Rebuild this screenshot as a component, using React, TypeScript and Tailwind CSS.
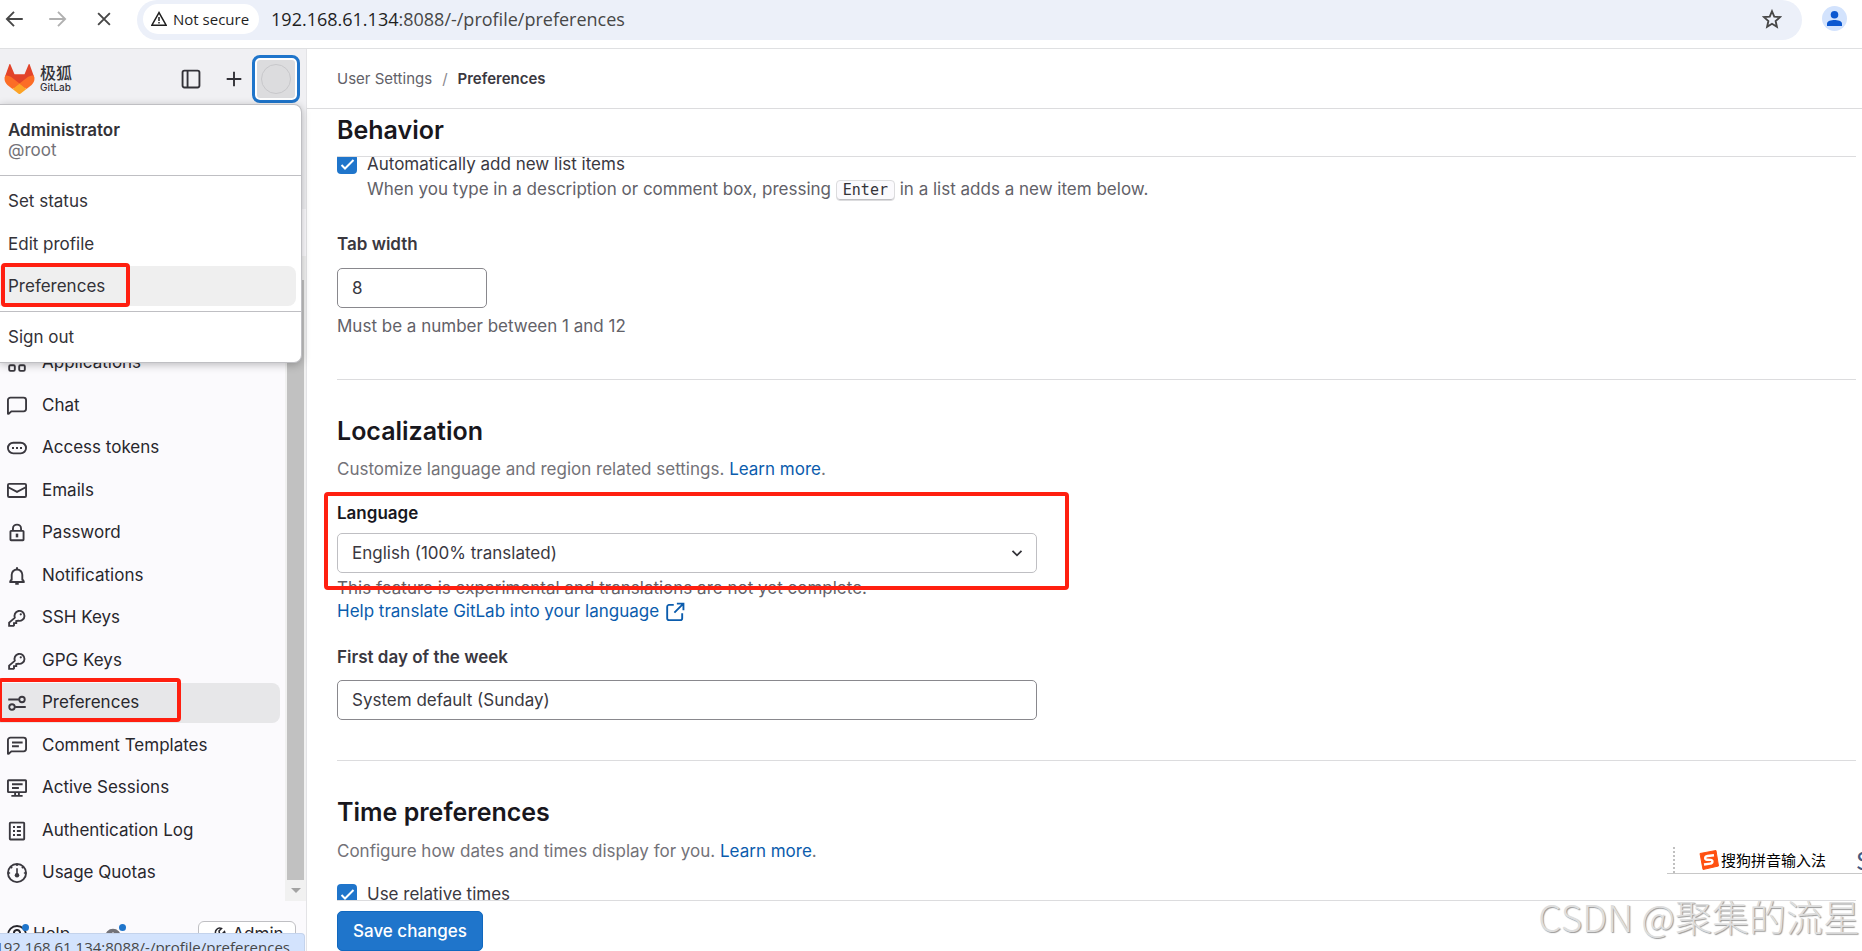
import React, { useState } from "react";

type IconProps = { className?: string };

const Svg = ({ className = "w-5 h-5", children }: IconProps & { children: React.ReactNode }) => (
  <svg
    viewBox="0 0 16 16"
    className={className}
    fill="none"
    stroke="currentColor"
    strokeWidth="1.5"
    aria-hidden="true"
  >
    {children}
  </svg>
);

const icons: Record<string, React.ReactNode> = {
  applications: (
    <>
      <rect x="1.75" y="1.75" width="4.5" height="4.5" rx="1" />
      <rect x="9.75" y="1.75" width="4.5" height="4.5" rx="1" />
      <rect x="1.75" y="9.75" width="4.5" height="4.5" rx="1" />
      <rect x="9.75" y="9.75" width="4.5" height="4.5" rx="1" />
    </>
  ),
  chat: <path d="M.75 14.8V3.25a2 2 0 0 1 2-2h10.5a2 2 0 0 1 2 2v7a2 2 0 0 1-2 2H3.5L.9 14.6" />,
  token: (
    <>
      <rect x=".75" y="3.75" width="14.5" height="8.5" rx="4.25" />
      <path d="M4 8h1.6M7.2 8h1.6M10.4 8H12" strokeWidth="1.6" />
    </>
  ),
  mail: (
    <>
      <rect x=".75" y="2.25" width="14.5" height="10.5" rx="1" />
      <path d="m1 5 7 3.7L15 5" />
    </>
  ),
  lock: (
    <>
      <rect x="2.75" y="6.25" width="10.5" height="7.5" rx=".5" />
      <path d="M4.75 6V4.5a3.25 3.25 0 0 1 6.5 0V6" />
      <path d="M8 8.5v3" strokeWidth="2" />
    </>
  ),
  bell: (
    <>
      <path d="M3.75 11.5V7a4.25 4.25 0 0 1 8.5 0v4.500M1.9 12.75h12.2M3.6 10.8l-1.300 1.900M12.4 10.800l1.300 1.900" />
      <path d="M8 .9v2M6.600 14.200h2.800" strokeWidth="1.6" />
    </>
  ),
  key: (
    <>
      <path d="M6.4 8.1A4 4 0 1 1 9 10.2l-1.6.3v1.6H5.6v1.8l-.4.4H1.7v-2.6l4.7-4" />
      <circle cx="11" cy="5" r=".9" fill="currentColor" stroke="none" />
    </>
  ),
  preferences: (
    <>
      <path d="M1 5.2h8.5M6.5 11.2H15" />
      <circle cx="12" cy="5.2" r="2.2" />
      <circle cx="4" cy="11.2" r="2.2" />
    </>
  ),
  comment: (
    <>
      <path d="M.75 14.8V3.25a2 2 0 0 1 2-2h10.5a2 2 0 0 1 2 2v7a2 2 0 0 1-2 2H3.5L.9 14.6" />
      <path d="M4 5.2h8.5M4 8.2h5.5" />
    </>
  ),
  monitor: (
    <>
      <rect x=".75" y="1.75" width="14.5" height="9.5" rx=".5" />
      <path d="M4 5h8.5M4 8h5.5M6.5 11.5v3M9.5 11.5v3M3.5 14.3h9" />
    </>
  ),
  log: (
    <>
      <rect x="2.25" y="1.25" width="11.5" height="13.5" rx=".5" />
      <path d="M4.8 4.8h1.6M4.8 8h1.6M4.8 11.2h1.6M7.9 4.8h3.2M7.9 8h3.2M7.9 11.2h3.2" />
    </>
  ),
  quota: (
    <>
      <circle cx="8" cy="8" r="7.25" />
      <path d="M8 4.2v5M8 1v1.3M1 8h1.5M13.5 8H15M3.2 3.2l.9.9M12.8 3.2l-.9.9" strokeWidth="1.3" />
      <circle cx="8" cy="9.8" r="1.8" fill="currentColor" stroke="none" />
    </>
  ),
};

const navItems = [
  { label: "Applications", icon: "applications" },
  { label: "Chat", icon: "chat" },
  { label: "Access tokens", icon: "token" },
  { label: "Emails", icon: "mail" },
  { label: "Password", icon: "lock" },
  { label: "Notifications", icon: "bell" },
  { label: "SSH Keys", icon: "key" },
  { label: "GPG Keys", icon: "key" },
  { label: "Preferences", icon: "preferences", active: true },
  { label: "Comment Templates", icon: "comment" },
  { label: "Active Sessions", icon: "monitor" },
  { label: "Authentication Log", icon: "log" },
  { label: "Usage Quotas", icon: "quota" },
];

function BrowserBar() {
  return (
    <div className="h-[49px] shrink-0 border-b border-[#dfe0e2] bg-white flex items-start text-[#474747]">
      <div className="h-[38px] w-[137px] shrink-0 flex items-center gap-6 pl-1">
        <button type="button" aria-label="Back">
          <Svg>
            <path d="M15 8H2.5M8 2.3 2.3 8 8 13.7" />
          </Svg>
        </button>
        <button type="button" aria-label="Forward" className="text-[#b0b0b0]">
          <Svg>
            <path d="M1 8h12.5M8 2.3 13.7 8 8 13.7" />
          </Svg>
        </button>
        <button type="button" aria-label="Stop" className="ml-0.5">
          <Svg>
            <path d="m3.3 3.3 9.4 9.4M12.7 3.3l-9.4 9.4" />
          </Svg>
        </button>
      </div>
      <div className="h-10 flex-1 rounded-[20px] bg-[#ecf0f9] flex items-center pb-0.5 pl-1.5 pr-5">
        <div className="h-[30px] rounded-full bg-white flex items-center gap-1.5 px-2 text-[#1f1f1f]">
          <Svg className="w-4 h-4">
            <path d="M8 1.6.9 14.2h14.2z" />
            <path d="M8 6v4M8 11v1.6" />
          </Svg>
          <span className="font-['Open_Sans',sans-serif] text-[15px] leading-5 pr-0.5">Not secure</span>
        </div>
        <div className="ml-3 font-['Open_Sans',sans-serif] text-[18px] leading-6">
          <span className="text-[#1f1f1f]">192.168.61.134</span>:8088/-/profile/preferences
        </div>
        <button type="button" aria-label="Bookmark" className="ml-auto">
          <Svg>
            <path d="m8 1.8 1.8 4.3 4.6.4-3.5 3.1 1 4.6L8 11.8l-3.9 2.4 1-4.6-3.5-3.1 4.6-.4z" />
          </Svg>
        </button>
      </div>
      <div className="w-[60px] h-[37px] shrink-0 flex items-center pl-5">
        <button type="button" aria-label="Profile" className="w-[25px] h-[25px] rounded-full bg-[#d3e3fd]">
          <svg viewBox="0 0 25 25" fill="#0b57d0" aria-hidden="true">
            <circle cx="12.5" cy="8.8" r="3.8" />
            <path d="M5 20v-2.2c0-3 4.5-3.8 7.5-3.8s7.5.8 7.5 3.8V20z" />
          </svg>
        </button>
      </div>
    </div>
  );
}

function TanukiLogo() {
  return (
    <svg viewBox="0 0 31 30" className="w-[31px] h-[30px]" aria-hidden="true">
      <path fill="#e24329" d="M5.4.3 1.200 12 .8 14l14.7 15.5L30.200 14l-.4-2L25.600.3c-.2-.4-.7-.4-.9 0L20.500 10.200h-10L6.300.3c-.2-.4-.7-.4-.9 0z" />
      <path fill="#fc6d26" d="M1.2 11.5C-.2 15 .7 18.600 3.400 21l5.100 4 7-5.600-8-6.200c-1.700-1.200-3.800-1.700-6.300-1.700zM29.800 11.500c1.400 3.500.5 7.100-2.200 9.500l-5.100 4-7-5.600 8-6.200c1.700-1.200 3.800-1.700 6.300-1.700z" />
      <path fill="#fca326" d="m8.500 25 6.100 4.700c.6.400 1.200.4 1.800 0l6.100-4.700-7-5.600z" />
    </svg>
  );
}

function UserMenu() {
  const item = "flex items-center h-10 mr-[5px] pt-0.5 pl-2 rounded-r-lg text-[#333238]";
  return (
    <div className="absolute left-0 top-[55px] z-20 w-[302px] rounded-r-lg border border-l-0 border-[#bfbfc3] bg-white shadow-[0_2px_8px_rgba(0,0,0,0.25)]">
      <div className="h-[71px] pl-2 pt-[15px] border-b border-[#bfbfc3]">
        <div className="font-semibold leading-5 text-[#333238]">Administrator</div>
        <div className="leading-5 text-[#737278]">@root</div>
      </div>
      <div className="py-[5px] h-[136px] flex flex-col justify-between border-b border-[#bfbfc3]">
        <a href="#status" className={item}>Set status</a>
        <a href="#profile" className={item}>Edit profile</a>
        <div className="relative">
          <a href="#preferences" className={`${item} bg-[#efefef]`}>Preferences</a>
          <div className="absolute left-px -top-[3px] w-[129px] h-11 rounded-[4px] border-4 border-[#ff1f10]" />
        </div>
      </div>
      <div className="py-[5px]">
        <a href="#signout" className={item}>Sign out</a>
      </div>
    </div>
  );
}

function Sidebar() {
  return (
    <aside className="relative w-[307px] shrink-0 flex flex-col border-r border-[#e3e3e6] bg-[#fbfafd] text-[17px] text-[#28272d]">
      <div className="h-40 shrink-0 bg-[#f0f0f3]">
        <div className="flex items-center h-[60px] pl-1 pr-1.5">
          <TanukiLogo />
          <div className="ml-[5px] flex flex-col text-[#333238] font-['Inter','Noto_Sans_CJK_SC',sans-serif]">
            <span className="text-[16px] leading-[17px] font-medium">极狐</span>
            <span className="text-[10px] leading-[11px] font-medium">GitLab</span>
          </div>
          <button type="button" aria-label="Toggle sidebar" className="ml-auto text-[#333238]">
            <Svg>
              <rect x="1.25" y="1.25" width="13.5" height="13.5" rx="1.5" />
              <path d="M5.25 1.5v13" />
            </Svg>
          </button>
          <button type="button" aria-label="Create new" className="ml-6 text-[#333238]">
            <Svg className="w-[18px] h-[18px]">
              <path d="M8 1.5v13M1.5 8h13" strokeWidth="1.7" />
            </Svg>
          </button>
          <button
            type="button"
            aria-label="Administrator user menu"
            className="ml-[9px] w-12 h-12 rounded-lg border-[3px] border-[#1f75cb] bg-[#dcdcde] shadow-[inset_0_0_0_2px_#fff] flex items-center justify-center"
          >
            <span className="w-[30px] h-[30px] rounded-full border border-[#c8c8cb]" />
          </button>
        </div>
      </div>
      <UserMenu />

      <div className="mt-[47px] h-[645px] shrink-0 flex">
        <nav className="flex-1 pt-[87px]">
          <ul className="h-[550px] flex flex-col justify-between">
            {navItems.map((item) => (
              <li key={item.label} className="relative">
                <a
                  href={`#${item.icon}`}
                  className={`flex items-center h-10 mr-[5px] pl-[7px] gap-[15px] rounded-r-lg ${item.active ? "bg-[#e7e7e9]" : ""}`}
                >
                  <Svg className="w-5 h-5 text-[#3a383f]">{icons[item.icon]}</Svg>
                  <span>{item.label}</span>
                </a>
                {item.active && (
                  <div className="absolute -left-[2px] -top-[5px] w-[183px] h-11 rounded-[4px] border-4 border-[#ff1f10]" />
                )}
              </li>
            ))}
          </ul>
        </nav>
        <div className="w-[21px] bg-[#f1f1f1] flex flex-col items-center pt-6">
          <div className="w-[17px] flex-1 bg-[#c1c1c1]" />
          <div className="h-[21px] flex items-center">
            <div className="border-x-[5px] border-t-[5px] border-x-transparent border-t-[#a3a3a3]" />
          </div>
        </div>
      </div>

      <div className="shrink-0 flex items-start pt-5 pl-[7px] pr-2.5">
        <button type="button" className="relative flex items-center gap-1.5 h-7">
          <Svg className="w-5 h-5">
            <circle cx="8" cy="8" r="7.25" />
            <path d="M5.5 6.500a2.500 2.500 0 1 1 3.500 2.300c-.7.300-1 .7-1 1.200" />
          </Svg>
          <span>Help</span>
          <span className="absolute left-[15px] top-[3px] w-[7px] h-[7px] rounded-full bg-[#1f75cb]" />
        </button>
        <button type="button" aria-label="Updates" className="relative ml-[34px] flex items-center h-8">
          <Svg className="w-[18px] h-[18px] text-[#737278]">
            <circle cx="8" cy="8" r="6.5" fill="currentColor" />
            <path d="M8 4v5" stroke="#fff" />
          </Svg>
          <span className="absolute left-[15px] top-[3px] w-[7px] h-[7px] rounded-full bg-[#1f75cb]" />
        </button>
        <a
          href="#admin"
          className="ml-auto w-[98px] h-10 pb-3 rounded-md border border-[#bfbfc3] bg-white flex items-center justify-center gap-1.5"
        >
          <Svg className="w-4 h-4">
            <path d="M2 14.5a2 2 0 0 1-.5-3L6 7.500A4.300 4.300 0 0 1 11.500 1.500L9 4l.5 2.500L12 7l2.500-2.500A4.300 4.300 0 0 1 8.500 10l-4 4.500a2 2 0 0 1-2.500 0z" />
          </Svg>
          Admin
        </a>
      </div>
    </aside>
  );
}

function Checkbox({ id, label, hint }: { id: string; label: string; hint?: React.ReactNode }) {
  return (
    <div className="flex gap-2.5">
      <span className="relative w-5 h-5 shrink-0">
        <input
          id={id}
          type="checkbox"
          defaultChecked
          className="block w-5 h-5 appearance-none rounded bg-[#1f75cb]"
        />
        <svg viewBox="0 0 20 20" className="absolute inset-0 pointer-events-none" fill="none" stroke="#fff" strokeWidth="2" aria-hidden="true">
          <path d="m4.5 11 3.5 3.500L16.500 6" />
        </svg>
      </span>
      <div>
        <label htmlFor={id} className="block leading-5 text-[#3a383f]">{label}</label>
        {hint}
      </div>
    </div>
  );
}

function LearnMore() {
  return <a href="#learn" className="text-[#0b5cad]">Learn more</a>;
}

export default function App() {
  const [tabWidth, setTabWidth] = useState("8");
  const control = "block h-10 rounded-[5px] border bg-white pl-3.5 text-[#3a383f] appearance-none";

  return (
    <div className="relative h-screen flex flex-col overflow-hidden bg-white font-['Inter',sans-serif]">
      <BrowserBar />
      <div className="flex flex-1 min-h-0">
        <Sidebar />

        <main className="relative flex-1 min-w-0 flex flex-col text-[17px] text-[#3a383f]">
          <nav className="h-[60px] shrink-0 border-b border-[#dcdcde] flex items-center gap-2.5 pt-0.5 pl-[30px] text-[15px]">
            <a href="#settings" className="text-[#626168]">User Settings</a>
            <span className="text-[#89888d]">/</span>
            <a href="#preferences" className="font-semibold">Preferences</a>
          </nav>

          <div className="flex-1 min-h-0 overflow-hidden pl-[30px] pr-1.5 leading-6">
            <section className="h-[271px] border-b border-[#dcdcde]">
              <div className="relative z-10 h-12 border-b border-[#dcdcde] bg-white flex items-center pb-1.5">
                <h2 className="text-[25px] leading-8 font-semibold text-[#18171d]">Behavior</h2>
              </div>
              <div className="-mt-[3px]">
                <Checkbox
                  id="auto-list"
                  label="Automatically add new list items"
                  hint={
                    <p className="mt-[3px] text-[#626168]">
                      When you type in a description or comment box, pressing{" "}
                      <kbd className="inline-block h-[21px] px-1.5 rounded border border-[#dcdcde] bg-[#fbfafd] font-['DejaVu_Sans_Mono',monospace] text-[15px] leading-[19px] text-[#333238] shadow-[inset_0_-1px_0_#bfbfc3]">
                        Enter
                      </kbd>{" "}
                      in a list adds a new item below.
                    </p>
                  }
                />
              </div>
              <label htmlFor="tab-width" className="block mt-[31px] font-semibold">Tab width</label>
              <input
                id="tab-width"
                value={tabWidth}
                onChange={(e) => setTabWidth(e.target.value)}
                className={`${control} mt-3 w-[150px] border-[#89888d]`}
              />
              <p className="mt-1.5 text-[#626168]">Must be a number between 1 and 12</p>
            </section>

            <section className="h-[381px] pt-[35px] border-b border-[#dcdcde]">
              <h2 className="text-[25px] leading-8 font-semibold text-[#18171d]">Localization</h2>
              <p className="mt-2.5 text-[#737278]">
                Customize language and region related settings. <LearnMore />.
              </p>
              <div className="relative w-[700px] max-w-full mt-5">
                <label htmlFor="language" className="block font-semibold text-[#18171d]">Language</label>
                <select id="language" className={`${control} mt-2 w-full border-[#bfbfc3]`}>
                  <option>English (100% translated)</option>
                </select>
                <Svg className="absolute right-3 top-[44px] w-4 h-4 pointer-events-none text-[#333238]">
                  <path d="m3.5 5.800 4.500 4.500 4.500-4.500" strokeWidth="1.8" />
                </Svg>
                <div className="absolute -left-[13px] -right-8 -top-[9px] h-[98px] rounded-[4px] border-4 border-[#ff1f10]" />
              </div>
              <p className="mt-1 leading-[23px] text-[#626168]">
                This feature is experimental and translations are not yet complete.
              </p>
              <a href="#translate" className="flex items-center gap-1.5 leading-[23px] text-[#0b5cad]">
                Help translate GitLab into your language
                <Svg>
                  <path d="M7 2.250H3a1.500 1.500 0 0 0-1.250 1.500V13a1.500 1.500 0 0 0 1.500 1.500h9A1.500 1.500 0 0 0 13.750 13V9M9.500 1.250h5.250v5.250M14.500 1.500 7.500 8.500" />
                </Svg>
              </a>
              <label htmlFor="first-day" className="block mt-[22px] font-semibold">First day of the week</label>
              <select id="first-day" className={`${control} mt-[11px] w-[700px] max-w-full border-[#89888d]`}>
                <option>System default (Sunday)</option>
              </select>
            </section>

            <section className="pt-[35px]">
              <h2 className="text-[25px] leading-8 font-semibold text-[#18171d]">Time preferences</h2>
              <p className="mt-[11px] mb-[21px] text-[#737278]">
                Configure how dates and times display for you. <LearnMore />.
              </p>
              <Checkbox id="relative-times" label="Use relative times" />
            </section>
          </div>

          <div className="h-[51px] shrink-0 ml-[30px] mr-1.5 border-t border-[#dcdcde] bg-white pt-2.5">
            <button type="button" className="h-10 w-[146px] pt-0.5 rounded-[5px] bg-[#1f75cb] border border-[#1068bf] text-white font-medium">
              Save changes
            </button>
          </div>

          {/* Input method toolbar floating over the page */}
          <div className="absolute right-0 bottom-[77px] w-[195px] h-[27px] border-b border-[#c8c8c8] flex items-center pl-1.5 overflow-hidden">
            <div className="h-full border-l-2 border-dotted border-[#c0c0c0]" />
            <svg viewBox="0 0 20 20" className="ml-6 w-5 h-5 shrink-0" aria-hidden="true">
              <path d="M1 3.5 17 .5l2.500 15.500L4 19.500z" fill="#ff5011" stroke="#ff5011" strokeLinejoin="round" />
              <path d="M15 5.200 8.500 6c-3 .5-3 3.600-.5 3.700l3.500.2c2.700.2 2.500 3.300-.2 3.700l-6.300.9" fill="none" stroke="#fff" strokeWidth="2.4" />
            </svg>
            <span className="ml-0.5 text-[15px] whitespace-nowrap text-black font-['Noto_Sans_CJK_SC',sans-serif]">搜狗拼音输入法</span>
            <span className="ml-[30px] text-[24px] text-[#445a80] font-['Noto_Sans_CJK_SC',sans-serif]">S</span>
          </div>
          <div className="absolute right-0.5 bottom-[15px] text-[37px] leading-10 whitespace-nowrap font-light text-[#dedede] font-['Noto_Sans_CJK_SC',sans-serif] [text-shadow:1px_1px_1px_#999]">
            CSDN @聚集的流星
          </div>
        </main>
      </div>

      {/* Browser link status bubble */}
      <div className="absolute left-0 bottom-0 z-30 w-[305px] h-[18px] rounded-tr border-t border-r border-[#c4d3ec] bg-[#d3e3fd] overflow-hidden flex justify-end pr-3.5 font-['Open_Sans',sans-serif] text-[15px] leading-[26px] whitespace-nowrap text-[#474747]">
        192.168.61.134:8088/-/profile/preferences
      </div>
    </div>
  );
}
